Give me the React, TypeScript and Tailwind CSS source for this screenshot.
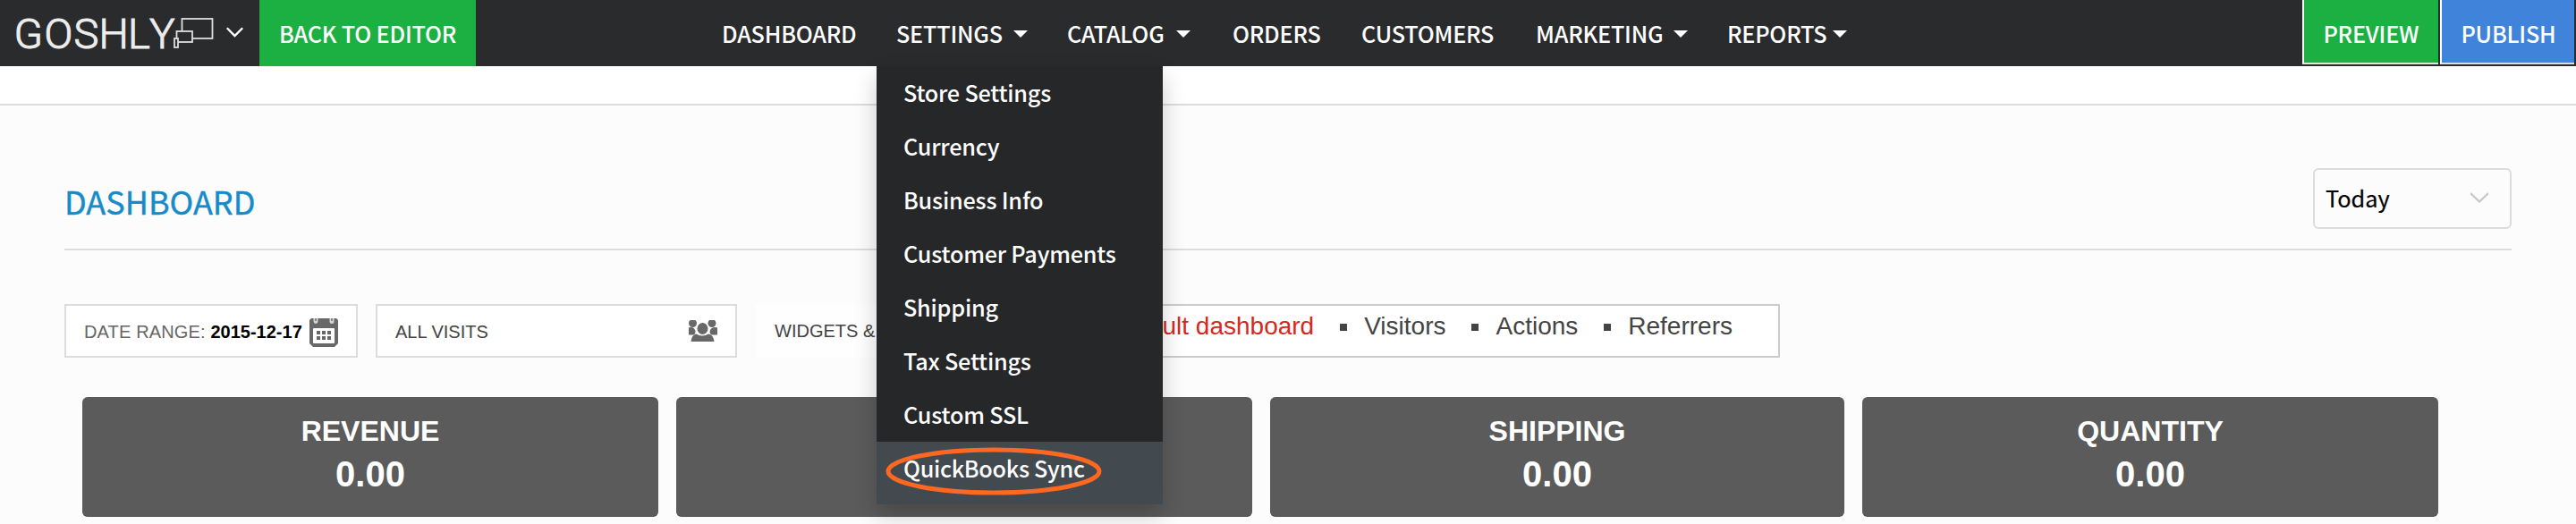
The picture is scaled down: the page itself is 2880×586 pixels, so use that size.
import React from "react";

const CJK = "font-['Noto_Sans_CJK_SC','Open_Sans',sans-serif]";

function Caret({ className }: { className: string }) {
  return (
    <svg viewBox="0 0 16 8" className={`h-2 w-4 shrink-0 ${className}`} fill="#fff">
      <path d="M0 0h16l-8 8z" />
    </svg>
  );
}

function Logo() {
  return (
    <svg viewBox="-8 -10 232 58" className="h-[58px] w-[232px] shrink-0">
      <text
        y="33.500"
        x="-2.300 31.500 64.500 92.500 125 149.200"
        fontFamily="Roboto, sans-serif"
        fontSize="47"
        fontWeight="300"
        fill="#ececec"
        stroke="#ececec"
        strokeWidth="1.100"
      >
        GOSHLY
      </text>
      <g fill="#2a2b2d" stroke="#dedede" strokeWidth="1.800">
        <rect x="185.500" y="1" width="34" height="22" />
        <rect x="179.500" y="15" width="17.500" height="12" />
        <rect x="177" y="23" width="4" height="10" />
      </g>
    </svg>
  );
}

function CalendarIcon() {
  return (
    <svg viewBox="0 0 32 32" className="size-8 shrink-0">
      <path d="M0 2l2-2h28l2 2v26l-4 4H4l-4-4z" fill="#686868" />
      <path d="M4.500 0h5v3.500a2.500 2.500 0 0 1-5 0zM22.500 0h5v3.500a2.500 2.500 0 0 1-5 0z" fill="#d4d4d4" />
      <path d="M6.200 0h1.600v3H6.200zM24.200 0h1.600v3h-1.600z" fill="#777" />
      <rect x="4" y="11" width="24" height="17" rx="1" fill="#fff" />
      <g fill="#686868">
        <path d="M8 14h4v4H8zM14 14h4v4h-4zM20 14h4v4h-4zM8 20h4v4H8zM14 20h4v4h-4zM20 20h4v4h-4z" />
      </g>
    </svg>
  );
}

function PeopleIcon() {
  return (
    <svg viewBox="0 0 32 24" className="h-6 w-8 shrink-0" fill="#686868">
      <ellipse cx="4.500" cy="3.500" rx="4.500" ry="4.500" />
      <ellipse cx="26" cy="3.500" rx="4.500" ry="4.500" />
      <path d="M0 8.500c4-1.500 7 .5 7.500 4 0 2-1 4-2.500 4H0zM32 8.500c-4-1.500-8 .5-8.500 4 0 2 1 4 2.500 4h6z" />
      <ellipse cx="15.500" cy="9.500" rx="6" ry="6.500" />
      <path d="M2.500 24c.5-5 3-8 6-8.500 4 2.500 9 2.500 13.500 0 3.500.5 6 3.500 6.500 8.500z" />
    </svg>
  );
}

const nav = [
  { label: "DASHBOARD", width: "w-[195px]", caret: "" },
  { label: "SETTINGS", width: "w-[191px]", caret: "ml-3" },
  { label: "CATALOG", width: "w-[185px]", caret: "ml-[13px]" },
  { label: "ORDERS", width: "w-36", caret: "" },
  { label: "CUSTOMERS", width: "w-[195px]", caret: "" },
  { label: "MARKETING", width: "w-[214px]", caret: "ml-3" },
  { label: "REPORTS", width: "w-[140px]", caret: "ml-[7px]" },
];

const menu = [
  "Store Settings",
  "Currency",
  "Business Info",
  "Customer Payments",
  "Shipping",
  "Tax Settings",
  "Custom SSL",
];

const cards = [
  { id: 1, title: "REVENUE", value: "0.00", width: "w-[644px]", gap: "mr-5" },
  { id: 2, title: "", value: "", width: "w-[644px]", gap: "mr-5" },
  { id: 3, title: "SHIPPING", value: "0.00", width: "w-[642px]", gap: "mr-5" },
  { id: 4, title: "QUANTITY", value: "0.00", width: "w-[644px]", gap: "" },
];

export default function App() {
  return (
    <div className="relative h-[586px] w-[2880px] overflow-hidden bg-[#fcfcfc] font-['Liberation_Sans',Arial,sans-serif]">
      <header
        className={`flex h-[74px] bg-[#2a2b2d] text-[25.2px] leading-[74px] font-medium tracking-[-0.2px] text-white ${CJK}`}
      >
        <div className="flex w-[290px] pt-2.5 pl-2.5">
          <Logo />
          <svg viewBox="0 0 20 12" className="mt-5 ml-[10px] h-3 w-5" fill="none" stroke="#fff" strokeWidth="2.4" strokeLinecap="round">
            <path d="M2.500 2l8 8 8-8" />
          </svg>
        </div>
        <a className="w-[242px] bg-[#1cb042] pl-[22px]">BACK TO EDITOR</a>
        <nav className="flex pl-[275px]">
          {nav.map((n) => (
            <a key={n.label} className={`flex ${n.width}`}>
              {n.label}
              {n.caret && <Caret className={`mt-[34px] ${n.caret}`} />}
            </a>
          ))}
        </nav>
        <div className="ml-auto flex">
          <a className="mr-0.5 h-[72px] w-[152px] border-b-2 border-l-2 border-b-[#d5ecdb] border-l-white bg-[#1cb042] pl-[21.500px]">PREVIEW</a>
          <a className="mr-0.5 h-[72px] w-[150px] border-b-2 border-l-2 border-b-[#cfdff3] border-l-white bg-[#4083da] pl-[21.500px]">PUBLISH</a>
        </div>
      </header>

      <div className="h-11 border-b-2 border-[#dcdcdc] bg-white" />

      <main className="pr-[72px] pl-[72px]">
        <div className="flex h-[162px] justify-between border-b-2 border-[#dcdcdc] pt-[70px]">
          <h1 className={`h-[72px] text-[36px] leading-[72px] text-[#168bca] ${CJK} [-webkit-text-stroke:0.4px_#168bca]`}>DASHBOARD</h1>
          <div className="flex h-[68px] w-[222px] justify-between rounded-md border-2 border-[#dcdcdc] pr-6 pl-3">
            <span className={`text-[25.300px] leading-[62px] text-black ${CJK} [-webkit-text-stroke:0.2px_#000]`}>Today</span>
            <svg viewBox="0 0 20 12" className="mt-[25px] h-3 w-5" fill="none" stroke="#c6c6c6" strokeWidth="2.200">
              <path d="M0 1l10 9.500L20 1" />
            </svg>
          </div>
        </div>

        <div className="mt-15 flex h-15 text-[20px] leading-[58px] text-[#444]">
          <div className="flex w-[328px] border-2 border-[#dcdcdc] bg-white pl-5">
            <span className="tracking-[0.15px] whitespace-pre text-[#666]">DATE RANGE: </span>
            <span className="font-bold text-black">2015-12-17</span>
            <div className="mt-3.5 ml-2">
              <CalendarIcon />
            </div>
          </div>
          <div className="ml-5 flex w-[404px] justify-between border-2 border-[#dcdcdc] bg-white pr-5 pl-5">
            <span>ALL VISITS</span>
            <div className="mt-4">
              <PeopleIcon />
            </div>
          </div>
          <div className="ml-[21px] w-[350px] bg-[#fefefe] py-px pl-[21px]">WIDGETS &amp;</div>
          <div className="flex w-[795px] justify-end border-2 border-[#ccc] bg-white pr-[51px] text-[28px] leading-[45px]">
            <span className="text-[#d4291f]">Default dashboard</span>
            {["Visitors", "Actions", "Referrers"].map((t) => (
              <div key={t} className="flex">
                <i className="mt-5 mr-[19px] ml-[29px] size-2 bg-[#444]" />
                <span>{t}</span>
              </div>
            ))}
          </div>
        </div>

        <div className="mt-11 ml-5 flex">
          {cards.map((c) => (
            <section
              key={c.id}
              className={`h-[134px] shrink-0 rounded-md border-b border-[#505050] bg-[#5b5b5b] pt-[14px] text-center font-bold text-white ${c.width} ${c.gap}`}
            >
              <h2 className="text-[32px] leading-[48px]">{c.title}</h2>
              <p className="text-[40px] leading-[48px]">{c.value}</p>
            </section>
          ))}
        </div>
      </main>

      <div
        className={`absolute top-[74px] left-[980px] w-80 bg-[#262729] text-[25.2px] leading-[58px] font-medium tracking-[-0.2px] text-white shadow-[0_12px_24px_rgba(0,0,0,0.2)] ${CJK}`}
      >
        {menu.map((m) => (
          <a key={m} className="block h-15 pl-[30px]">
            {m}
          </a>
        ))}
        <a className="relative block h-[70px] bg-[#42494f] pl-[30px] tracking-[-0.3px]">
          QuickBooks Sync
          <svg viewBox="0 0 242 54" className="absolute top-[6px] left-[10px] h-[54px] w-[242px]" fill="none" stroke="#ff6820" strokeWidth="5">
            <ellipse cx="121" cy="27" rx="118" ry="24" />
          </svg>
        </a>
      </div>
    </div>
  );
}
